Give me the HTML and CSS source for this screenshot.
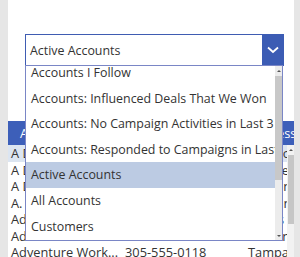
FILE: index.html
```html
<!DOCTYPE html>
<html>
<head>
<meta charset="utf-8">
<link rel="stylesheet" href="styles.css">
</head>
<body>
<div class="page">
  <div class="combo">
    <div class="combo-value">Active Accounts</div>
    <div class="combo-btn">
      <svg width="12" height="8" viewBox="0 0 12 8"><path d="M1 1.5 L6 6 L11 1.5" fill="none" stroke="#fff" stroke-width="1.8"/></svg>
    </div>
  </div>

  <div class="grid">
    <div class="grid-head">
      <div class="c1">Account Name</div>
      <div class="c2">Main Phone</div>
      <div class="c3">Address 1: City</div>
    </div>
    <div class="grid-body">
      <div class="rows">
        <div class="row sel"><div class="c1">A Datum Corporation</div><div class="c2">555-0158</div><div class="c3">Redmond</div></div>
        <div class="row"><div class="c1">A Datum Fabrikam</div><div class="c2">555-0101</div><div class="c3">Seattle</div></div>
        <div class="row"><div class="c1">A Datum Systems</div><div class="c2">555-0190</div><div class="c3">Renton</div></div>
        <div class="row"><div class="c1">A. Datum</div><div class="c2">555-0111</div><div class="c3">Portland</div></div>
        <div class="row"><div class="c1">Adatum Sales</div><div class="c2">555-0144</div><div class="c3">Dallas</div></div>
        <div class="row"><div class="c1">Adventure Works</div><div class="c2">555-0122</div><div class="c3">Boston</div></div>
        <div class="row"><div class="c1">Adventure Work...</div><div class="c2">305-555-0118</div><div class="c3">Tampa</div></div>
      </div>
      <div class="vscroll">
        <div class="arrow up"></div>
        <div class="thumb"></div>
      </div>
    </div>
  </div>

  <div class="list">
    <div class="items">
      <div class="item">Accounts I Follow</div>
      <div class="item">Accounts: Influenced Deals That We Won</div>
      <div class="item">Accounts: No Campaign Activities in Last 3 Months</div>
      <div class="item">Accounts: Responded to Campaigns in Last 6 Months</div>
      <div class="item hl">Active Accounts</div>
      <div class="item">All Accounts</div>
      <div class="item">Customers</div>
    </div>
    <div class="lscroll">
      <div class="arrow up"></div>
      <div class="lthumb"></div>
      <div class="arrow down"></div>
    </div>
  </div>
</div>
</body>
</html>
```

FILE: styles.css
```css
html, body {
  margin: 0;
  padding: 0;
}
body {
  background: #e6e6e6;
  font-family: "Open Sans", "Noto Sans", sans-serif;
  color: #333;
}
.page {
  position: relative;
  margin-left: 8px;
  width: 286px;
  height: 257px;
  background: #fff;
  overflow: hidden;
  display: flex;
  flex-direction: column;
}
.combo {
  margin-top: 34px;
  margin-left: 17px;
  width: 259px;
  height: 32px;
  box-sizing: border-box;
  border: 1px solid #3f5cb2;
  display: flex;
}
.combo-value {
  flex: 1;
  font-size: 12.4px;
  line-height: 31px;
  padding-left: 4px;
  white-space: nowrap;
}
.combo-btn {
  width: 22px;
  margin: -1px -1px -1px 0;
  background: #3c5cb4;
  display: flex;
  align-items: center;
  justify-content: center;
}
.grid {
  margin-top: 55px;
  display: flex;
  flex-direction: column;
  font-size: 12.8px;
}
.grid-head {
  display: grid;
  grid-template-columns: 117px 123px 1fr;
  height: 24px;
  line-height: 24px;
  background: #3d5fb9;
  color: #fff;
  white-space: nowrap;
  overflow: hidden;
}
.grid-head .c1 { padding-left: 12px; }
.grid-body {
  display: flex;
}
.rows {
  flex: 1;
  overflow: hidden;
}
.row {
  display: grid;
  grid-template-columns: 117px 123px 1fr;
  height: 16.5px;
  line-height: 16.5px;
  white-space: nowrap;
  color: #333;
}
.row .c1 { padding-left: 3px; }
.row.sel { background: #dce5f1; }
.vscroll {
  width: 7px;
  background: #f2f2f2;
  display: flex;
  flex-direction: column;
  align-items: center;
}
.thumb {
  width: 6px;
  height: 69px;
  margin-top: 4px;
  background: #c6c6c6;
}
.arrow {
  width: 0;
  height: 0;
  border-left: 2px solid transparent;
  border-right: 2px solid transparent;
}
.arrow.up {
  margin-top: 4px;
  border-bottom: 2px solid #555;
}
.arrow.down {
  margin-top: auto;
  margin-bottom: 3px;
  border-top: 2px solid #555;
}
.list {
  position: absolute;
  left: 17px;
  top: 65px;
  width: 258px;
  height: 176px;
  box-sizing: border-box;
  border: 1px solid #7a86c6;
  background: #fff;
  display: flex;
  overflow: hidden;
}
.items {
  flex: 1;
  margin-top: -6px;
  font-size: 12.4px;
  overflow: hidden;
}
.item {
  height: 25.6px;
  line-height: 25.6px;
  padding-left: 5px;
  white-space: nowrap;
  overflow: hidden;
}
.item.hl {
  background: #bccbe3;
}
.lscroll {
  width: 7px;
  background: #ececec;
  display: flex;
  flex-direction: column;
  align-items: center;
}
.lthumb {
  width: 7px;
  height: 104px;
  margin-top: 4px;
  background: #c8c8c8;
}
```
